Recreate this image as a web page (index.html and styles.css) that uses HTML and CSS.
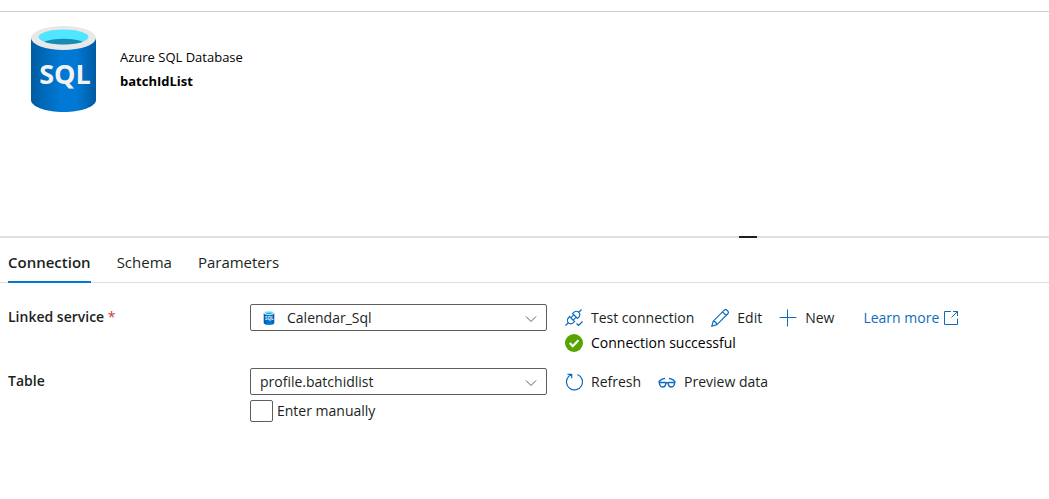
FILE: index.html
```html
<!DOCTYPE html>
<html lang="en">
<head>
<meta charset="utf-8">
<meta name="viewport" content="width=device-width, initial-scale=1">
<title>batchIdList - Azure SQL Database</title>
<link rel="stylesheet" href="styles.css">
</head>
<body>
<svg class="defs" aria-hidden="true">
  <defs>
    <linearGradient id="body-fill" x1="0" x2="1" y1="0" y2="0">
      <stop offset="0" stop-color="#005ba1"/>
      <stop offset="0.2" stop-color="#0069b9"/>
      <stop offset="0.45" stop-color="#0078d4"/>
      <stop offset="0.7" stop-color="#0078d4"/>
      <stop offset="1" stop-color="#005ba1"/>
    </linearGradient>
    <symbol id="sql-db" viewBox="0 0 65 86">
      <path d="M0 12v62c0 6.500 14.500 12 32.500 12S65 80.500 65 74V12z" fill="url(#body-fill)"/>
      <ellipse cx="32.500" cy="12" rx="32.500" ry="12" fill="#e8e8e8"/>
      <ellipse cx="32.500" cy="11" rx="25" ry="7.500" fill="#50e6ff"/>
      <path d="M13 15.800c5-2 12-3.100 19.500-3.100s14.500 1.100 19.500 3.100c-5 1.800-12 2.800-19.500 2.800S18 17.600 13 15.800z" fill="#198ab3"/>
      <text x="34" y="58" class="db-text" text-anchor="middle">SQL</text>
    </symbol>
  </defs>
</svg>

<header class="summary">
  <svg class="summary-icon" role="img" aria-label="SQL database"><use href="#sql-db"/></svg>
  <div class="summary-text">
    <p class="summary-kind">Azure SQL Database</p>
    <h1 class="summary-name">batchIdList</h1>
  </div>
</header>
<div class="splitter" role="separator"><span class="splitter-handle"></span></div>

<nav class="tabs">
  <button class="tab tab-active" type="button">Connection</button>
  <button class="tab" type="button">Schema</button>
  <button class="tab" type="button">Parameters</button>
</nav>

<main class="form">
  <label class="label" for="service">Linked service <span class="required">*</span></label>
  <div class="control">
    <svg class="select-icon" aria-hidden="true"><use href="#sql-db"/></svg>
    <select class="select select-with-icon" id="service"><option>Calendar_Sql</option></select>
    <svg class="chevron" viewBox="0 0 12 8" aria-hidden="true"><path d="M1 1.500l5 5 5-5"/></svg>
  </div>
  <div class="side">
    <div class="actions">
      <button class="action" type="button">
        <svg class="icon" viewBox="0 0 18 18" aria-hidden="true">
          <path d="M.5 16.500l2.500-2.500M13.500 3.500L16.500.5M4.500 7.500l5 5-1.300 1.300c-1.300 1.300-3.500 1.300-4.800 0s-1.300-3.500 0-4.800zM7.500 4.500l5 5 1.300-1.300c1.300-1.300 1.300-3.500 0-4.800s-3.500-1.300-4.800 0zM5.800 8.800l2.600-2.600M8.200 11.200l2.600-2.600M11.500 14.500l2 2 4-4"/>
        </svg>Test connection</button>
      <button class="action" type="button">
        <svg class="icon" viewBox="0 0 18 18" aria-hidden="true">
          <path d="M.8 17.200l1.400-5L13 1.400c.9-.9 2.300-.9 3.200 0l.4.400c.9.900.9 2.300 0 3.200L5.800 15.800zM11.500 2.900l3.600 3.600M2.200 12.200c1.800.2 3.400 1.800 3.600 3.600"/>
        </svg>Edit</button>
      <button class="action" type="button">
        <svg class="icon icon-thin" viewBox="0 0 18 18" aria-hidden="true"><path d="M.5 8.500h17M8.500.5v17"/></svg>New</button>
      <a class="learn" href="#">Learn more
        <svg class="icon-small" viewBox="0 0 14 14" aria-hidden="true"><path d="M7 .5H.5v13h13V7.500M9 .5h4.500V5M13.500.5l-6 6"/></svg></a>
    </div>
    <p class="status">
      <svg class="status-icon" viewBox="0 0 18 18" aria-hidden="true"><circle cx="9" cy="9" r="9" fill="#57a300"/><path d="M4.800 9l3 3.200 5.600-6" fill="none" stroke="#fff" stroke-width="2.200"/></svg>Connection successful</p>
  </div>

  <label class="label" for="table">Table</label>
  <div class="control-stack">
    <div class="control">
      <select class="select" id="table"><option>profile.batchidlist</option></select>
      <svg class="chevron" viewBox="0 0 12 8" aria-hidden="true"><path d="M1 1.500l5 5 5-5"/></svg>
    </div>
    <label class="manual"><input class="check" type="checkbox">Enter manually</label>
  </div>
  <div class="side">
    <div class="actions">
      <button class="action" type="button">
        <svg class="icon" viewBox="0 0 18 18" aria-hidden="true"><path d="M12.500 1.500A8 8 0 1 1 3.500 3.600L6.500 1.300M2.500 1.300h4.200v4"/></svg>Refresh</button>
      <button class="action" type="button">
        <svg class="icon icon-bold" viewBox="0 0 18 18" aria-hidden="true"><path d="M.5 9.500h6.800c.5 0 .7.300.6.900-.3 2.100-1.400 3.600-3.300 3.600s-3-1.400-3.200-4.500M17.500 9.500h-6.800c-.5 0-.7.300-.6.900.3 2.100 1.400 3.600 3.300 3.600s3-1.400 3.200-4.500M7.800 10.200c.7-.5 1.700-.5 2.400 0M.7 9.300C2 7 4 5.700 7 5.500M17.300 9.300C16 7 14 5.700 11 5.500"/></svg>Preview data</button>
    </div>
  </div>
</main>
</body>
</html>
```

FILE: styles.css
```css
* { box-sizing: border-box; }

body {
  margin: 0;
  padding-top: 11px;
  background: #fff;
  color: #201f1e;
  font: 14px/20px "Open Sans", "Noto Sans", sans-serif;
}

button, select, input { font: inherit; color: inherit; }

p, h1 { margin: 0; }

.defs { position: absolute; width: 0; height: 0; }

.db-text { font: 700 27px "Open Sans", sans-serif; fill: #f2f2f2; }

.summary {
  display: flex;
  gap: 24px;
  min-height: 225px;
  padding: 14px 31px;
  border-top: 1px solid #d0d0d0;
}

.summary-icon { width: 65px; height: 86px; flex: none; }

.summary-text {
  padding-top: 19px;
  color: #000;
  font-size: 13px;
  line-height: 24px;
}

.summary-name { font-size: 13px; font-weight: 700; }

.splitter { position: relative; height: 2px; background: #e1dfdd; }

.splitter-handle {
  position: absolute;
  right: 292px;
  width: 18px;
  height: 2px;
  background: #201f1e;
}

.tabs {
  display: flex;
  gap: 26px;
  height: 45px;
  padding: 4px 8px 0;
  border-bottom: 1px solid #e1dfdd;
}

.tab {
  height: 41px;
  padding: 0;
  border: 0;
  border-bottom: 2px solid transparent;
  background: none;
  font-size: 15px;
}

.tab-active { border-bottom-color: #0078d4; font-weight: 600; }

.form {
  display: grid;
  grid-template-columns: 242px 297px 1fr;
  row-gap: 15px;
  align-items: start;
  padding: 21px 8px;
}

.label { padding-top: 3px; font-weight: 600; }

.required { color: #d13438; font-weight: 400; }

.control { position: relative; }

.select {
  display: block;
  width: 100%;
  height: 27px;
  padding: 1px 30px 0 9px;
  border: 1px solid #605e5c;
  border-radius: 2px;
  background: #fff;
  appearance: none;
}

.select-with-icon { padding-left: 36px; }

.select-icon { position: absolute; left: 13px; top: 7px; width: 12px; height: 14px; }

.chevron {
  position: absolute;
  right: 10px;
  top: 11px;
  width: 12px;
  height: 8px;
  fill: none;
  stroke: #605e5c;
  pointer-events: none;
}

.side { padding-left: 18px; }

.actions { display: flex; gap: 17px; padding-top: 4px; }

.action {
  display: flex;
  align-items: center;
  gap: 8px;
  padding: 0;
  border: 0;
  background: none;
  white-space: nowrap;
}

.icon {
  width: 18px;
  height: 18px;
  flex: none;
  fill: none;
  stroke: #0f6cbd;
  stroke-width: 1.2;
}

.icon-thin { stroke-width: 1; }

.icon-bold { stroke-width: 1.4; }

.learn {
  display: flex;
  align-items: center;
  gap: 5px;
  margin-left: 12px;
  color: #0f6cbd;
  text-decoration: none;
  white-space: nowrap;
}

.icon-small { width: 14px; height: 14px; fill: none; stroke: #0f6cbd; }

.status {
  display: flex;
  align-items: center;
  gap: 8px;
  padding-top: 5px;
  color: #000;
}

.status-icon { width: 18px; height: 18px; }

.manual { display: flex; align-items: center; gap: 4px; padding-top: 5px; }

.check {
  width: 23px;
  height: 22px;
  margin: 0;
  border: 1px solid #605e5c;
  border-radius: 2px;
  appearance: none;
}

.check:checked { background: #0078d4; }
```
